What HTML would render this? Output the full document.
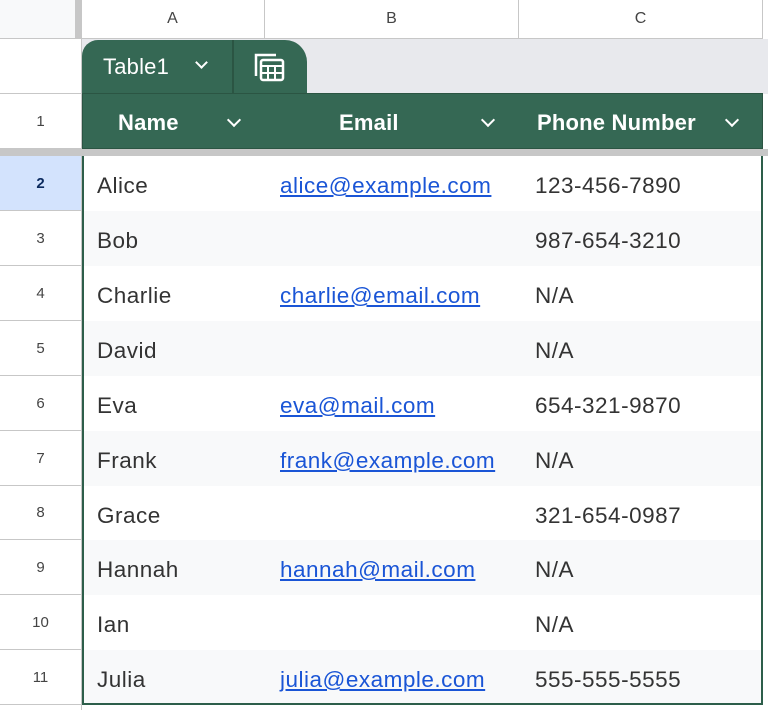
<!DOCTYPE html>
<html><head><style>
*{margin:0;padding:0;box-sizing:border-box}
body{width:768px;height:710px;overflow:hidden;background:#fff;font-family:"Liberation Sans",Arial,sans-serif;position:relative}
.a{position:absolute}
.ch{top:0;height:39px;border-right:1px solid #c7c7c7;border-bottom:1px solid #c7c7c7;font-size:16px;color:#444;display:flex;align-items:center;justify-content:center}
.rh{left:0;width:81px;border-bottom:1px solid #c7c7c7;font-size:15px;color:#444;display:flex;align-items:center;justify-content:center;background:#fff}
.row{left:84px;width:677px;height:55px;font-size:22.5px;color:#333;letter-spacing:0.5px}
.row span{position:absolute;top:17px}
.row a{color:#1a55d6;text-decoration:underline}
.hd{color:#fff;font-weight:bold;font-size:22px;top:110px;letter-spacing:0.2px}
.chev{position:absolute;width:10px;height:10px;border-right:2px solid #fff;border-bottom:2px solid #fff;transform:rotate(45deg)}
</style></head><body>
<div class="a" style="left:0;top:0;width:81px;height:39px;background:#f8f9fa;border-bottom:1px solid #c7c7c7"></div>
<div class="a" style="left:75px;top:0;width:6px;height:39px;background:#c7c7c7"></div>
<div class="a ch" style="left:81px;width:184px">A</div>
<div class="a ch" style="left:265px;width:254px">B</div>
<div class="a ch" style="left:519px;width:244px">C</div>
<div class="a" style="left:81px;top:0;width:1px;height:710px;background:#c7c7c7"></div>
<div class="a rh" style="top:39px;height:55px"></div>
<div class="a rh" style="top:94px;height:55px">1</div>
<div class="a" style="left:82px;top:39px;width:686px;height:55px;background:#e8e9ed"></div>
<div class="a" style="left:82px;top:40px;width:225px;height:54px;background:#356854;border-radius:16px 22px 0 0"></div>
<div class="a" style="left:232px;top:40px;width:2px;height:54px;background:#2b5543"></div>
<div class="a" style="left:103px;top:54px;color:#fff;font-size:22px;letter-spacing:0.2px">Table1</div>
<div class="chev" style="left:197px;top:58px;width:9px;height:9px"></div>
<svg class="a" style="left:254px;top:52px" width="32" height="30" viewBox="0 0 32 30" fill="none" stroke="#fff" stroke-width="2.5"><path d="M2 24V3h20"/><rect x="7" y="8" width="22" height="20" rx="2"/><path d="M7 14h22M7 21h22M14 14v14M21 14v14" stroke-width="2"/></svg>
<div class="a" style="left:82px;top:93px;width:681px;height:56px;background:#356854;border:1px solid #2b5543"></div>
<div class="a hd" style="left:118px">Name</div><div class="chev" style="left:229px;top:115px"></div>
<div class="a hd" style="left:339px">Email</div><div class="chev" style="left:483px;top:115px"></div>
<div class="a hd" style="left:537px">Phone Number</div><div class="chev" style="left:727px;top:115px"></div>
<div class="a" style="left:0;top:149px;width:768px;height:7px;background:#c7c7c7"></div>
<div class="a" style="left:82px;top:156px;width:681px;height:549px;border:2px solid #2d5e4a;border-top:none"></div>
<div class="a rh" style="top:156px;height:55px;background:#d3e3fd;color:#0b2a5e;font-weight:bold">2</div>
<div class="a rh" style="top:211px;height:55px">3</div>
<div class="a rh" style="top:266px;height:55px">4</div>
<div class="a rh" style="top:321px;height:55px">5</div>
<div class="a rh" style="top:376px;height:55px">6</div>
<div class="a rh" style="top:431px;height:55px">7</div>
<div class="a rh" style="top:486px;height:54px">8</div>
<div class="a rh" style="top:540px;height:55px">9</div>
<div class="a rh" style="top:595px;height:55px">10</div>
<div class="a rh" style="top:650px;height:55px">11</div>
<div class="a row" style="top:156px"><span style="left:13px">Alice</span><span style="left:196px"><a>alice@example.com</a></span><span style="left:451px">123-456-7890</span></div>
<div class="a row" style="top:211px;background:#f8f9fa"><span style="left:13px">Bob</span><span style="left:451px">987-654-3210</span></div>
<div class="a row" style="top:266px"><span style="left:13px">Charlie</span><span style="left:196px"><a>charlie@email.com</a></span><span style="left:451px">N/A</span></div>
<div class="a row" style="top:321px;background:#f8f9fa"><span style="left:13px">David</span><span style="left:451px">N/A</span></div>
<div class="a row" style="top:376px"><span style="left:13px">Eva</span><span style="left:196px"><a>eva@mail.com</a></span><span style="left:451px">654-321-9870</span></div>
<div class="a row" style="top:431px;background:#f8f9fa"><span style="left:13px">Frank</span><span style="left:196px"><a>frank@example.com</a></span><span style="left:451px">N/A</span></div>
<div class="a row" style="top:486px"><span style="left:13px">Grace</span><span style="left:451px">321-654-0987</span></div>
<div class="a row" style="top:540px;background:#f8f9fa"><span style="left:13px">Hannah</span><span style="left:196px"><a>hannah@mail.com</a></span><span style="left:451px">N/A</span></div>
<div class="a row" style="top:595px"><span style="left:13px">Ian</span><span style="left:451px">N/A</span></div>
<div class="a row" style="top:650px;background:#f8f9fa;height:53px"><span style="left:13px">Julia</span><span style="left:196px"><a>julia@example.com</a></span><span style="left:451px">555-555-5555</span></div>
</body></html>
